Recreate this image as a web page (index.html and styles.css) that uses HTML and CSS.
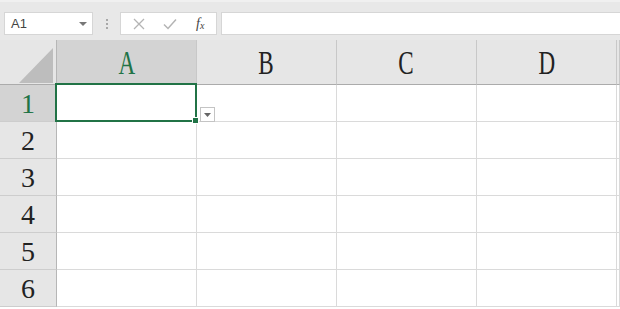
FILE: index.html
```html
<!DOCTYPE html>
<html lang="en">
<head>
    <meta charset="UTF-8">
    <meta name="viewport" content="width=device-width, initial-scale=1.0">
    <title>Sheet1</title>
    <link rel="stylesheet" href="styles.css">
</head>
<body>
    <div class="toolbar">
        <div class="name-box">
            <span>A1</span>
            <span class="caret"></span>
        </div>
        <div class="grip"><i></i><i></i><i></i></div>
        <div class="fx-buttons">
            <svg class="btn" width="14" height="14" viewBox="0 0 14 14"><path d="M2 2 L12 12 M12 2 L2 12" stroke="#b4b4b4" stroke-width="1.3" fill="none"/></svg>
            <svg class="btn" width="16" height="14" viewBox="0 0 16 14"><path d="M2 7.5 L6 11.5 L14 2.5" stroke="#b4b4b4" stroke-width="1.5" fill="none"/></svg>
            <span class="fx">f<sub>x</sub></span>
        </div>
        <div class="formula"></div>
    </div>

    <div class="sheet">
        <div class="corner">
            <svg width="34" height="35" viewBox="0 0 34 35"><polygon points="34,0 34,35 0,35" fill="#bdbdbd"/></svg>
        </div>
        <div class="col-head active"><span>A</span></div>
        <div class="col-head"><span>B</span></div>
        <div class="col-head"><span>C</span></div>
        <div class="col-head"><span>D</span></div>
        <div class="col-head"></div>

        <div class="row-head active">1</div>
        <div class="cell selected">
            <span class="handle"></span>
            <span class="drop"><svg width="7" height="4" viewBox="0 0 7 4"><polygon points="0,0 7,0 3.5,4" fill="#666"/></svg></span>
        </div>
        <div class="cell"></div><div class="cell"></div><div class="cell"></div><div class="cell"></div>

        <div class="row-head">2</div>
        <div class="cell"></div><div class="cell"></div><div class="cell"></div><div class="cell"></div><div class="cell"></div>

        <div class="row-head">3</div>
        <div class="cell"></div><div class="cell"></div><div class="cell"></div><div class="cell"></div><div class="cell"></div>

        <div class="row-head">4</div>
        <div class="cell"></div><div class="cell"></div><div class="cell"></div><div class="cell"></div><div class="cell"></div>

        <div class="row-head">5</div>
        <div class="cell"></div><div class="cell"></div><div class="cell"></div><div class="cell"></div><div class="cell"></div>

        <div class="row-head">6</div>
        <div class="cell"></div><div class="cell"></div><div class="cell"></div><div class="cell"></div><div class="cell"></div>
    </div>
</body>
</html>
```

FILE: styles.css
```css
body {
    margin: 0;
    width: 620px;
    height: 309px;
    overflow: hidden;
    background-color: #fff;
    font-family: "Liberation Sans", Arial, sans-serif;
}

.toolbar {
    height: 40px;
    box-sizing: border-box;
    padding-top: 10px;
    background-color: #e8e8e8;
    border-top: 2px solid #f0f0f0;
    display: flex;
    align-items: flex-start;
}

.name-box {
    margin-left: 4px;
    width: 89px;
    height: 23px;
    box-sizing: border-box;
    background-color: #fff;
    border: 1px solid #d6d6d6;
    display: flex;
    align-items: center;
    justify-content: space-between;
    padding: 0 5px 0 6px;
    font-size: 13px;
    color: #444;
}

.caret {
    width: 0;
    height: 0;
    border-left: 4px solid transparent;
    border-right: 4px solid transparent;
    border-top: 4px solid #777;
}

.grip {
    width: 27px;
    height: 23px;
    display: flex;
    flex-direction: column;
    align-items: center;
    justify-content: center;
    gap: 2px;
}

.grip i {
    width: 2px;
    height: 2px;
    background-color: #a8a8a8;
}

.fx-buttons {
    width: 97px;
    height: 23px;
    box-sizing: border-box;
    background-color: #fff;
    border: 1px solid #d6d6d6;
    display: flex;
    align-items: center;
    padding-left: 11px;
    gap: 16px;
}

.fx {
    font-family: "Liberation Serif", serif;
    font-style: italic;
    font-size: 14px;
    color: #444;
    margin-left: 2px;
}

.fx sub {
    font-size: 10px;
    vertical-align: -1px;
}

.formula {
    flex: 1;
    margin-left: 4px;
    height: 23px;
    box-sizing: border-box;
    background-color: #fff;
    border: 1px solid #d6d6d6;
    border-right: none;
}

.sheet {
    display: grid;
    grid-template-columns: 57px repeat(4, 140px) 3px;
    grid-template-rows: 45px repeat(6, 37px);
    font-family: "Liberation Serif", "Times New Roman", serif;
}

.corner {
    background-color: #e6e6e6;
    border-right: 1px solid #b6b6b6;
    border-bottom: 1px solid #ababab;
    display: flex;
    align-items: flex-end;
    justify-content: flex-end;
    padding: 0 3px 1px 0;
}

.col-head {
    background-color: #e6e6e6;
    border-right: 1px solid #c8c8c8;
    border-bottom: 1px solid #ababab;
    display: flex;
    align-items: center;
    justify-content: center;
    color: #222;
}

.col-head span {
    display: inline-block;
    font-size: 33px;
    transform: scaleX(0.7);
    margin-top: 3px;
}

.row-head {
    background-color: #e6e6e6;
    border-right: 1px solid #b6b6b6;
    border-bottom: 1px solid #cdcdcd;
    display: flex;
    align-items: center;
    justify-content: center;
    font-size: 28px;
    color: #222;
    padding-top: 1px;
}

.col-head.active,
.row-head.active {
    background-color: #d3d3d3;
    color: #217346;
}

.cell {
    border-right: 1px solid #dadada;
    border-bottom: 1px solid #dadada;
    position: relative;
}

.cell.selected::after {
    content: "";
    position: absolute;
    top: -2px;
    left: -2px;
    right: -1px;
    bottom: -1px;
    border: 2px solid #217346;
}

.handle {
    position: absolute;
    right: -3px;
    bottom: -3px;
    width: 5px;
    height: 5px;
    background-color: #217346;
    border: 1px solid #fff;
    z-index: 2;
}

.drop {
    position: absolute;
    left: 143px;
    bottom: -1px;
    width: 15px;
    height: 15px;
    box-sizing: border-box;
    border: 1px solid #c4c4c4;
    background-color: #fff;
    display: flex;
    align-items: center;
    justify-content: center;
    z-index: 2;
}
```
